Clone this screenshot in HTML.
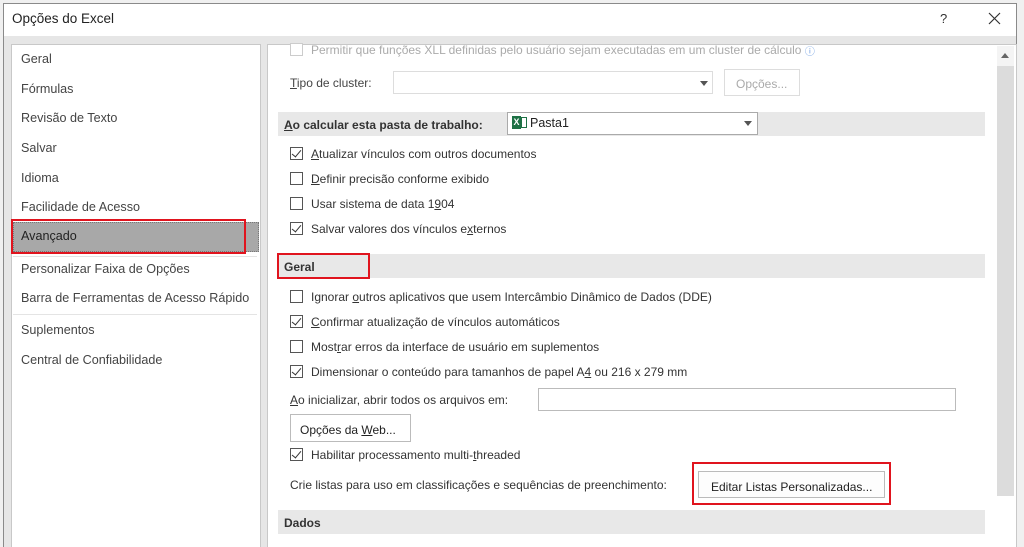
<!DOCTYPE html>
<html><head><meta charset="utf-8"><style>
*{box-sizing:border-box;margin:0;padding:0}
html,body{width:1024px;height:547px;overflow:hidden}
body{background:#f0f0f0;font-family:"Liberation Sans",sans-serif;font-size:12px;color:#333;position:relative}
.a{position:absolute;white-space:nowrap}
.dlg{left:3px;top:3px;width:1014px;height:544px;background:#e6e6e6;border:1px solid #8a8a8a;border-bottom:none}
.title{left:4px;top:4px;width:1012px;height:32px;background:#fff}
.left{left:11px;top:44px;width:250px;height:503px;background:#fff;border:1px solid #c8c8c8;border-bottom:none}
.right{left:267px;top:44px;width:750px;height:503px;background:#fff;border:1px solid #c8c8c8;border-bottom:none}
.li{left:21px;font-size:12.6px;color:#444}
.cb{width:13px;height:13px;border:1px solid #555;background:#fff;left:290px}
.cb.c::after{content:"";position:absolute;left:3px;top:0px;width:4px;height:8px;border:solid #333;border-width:0 1.3px 1.3px 0;transform:rotate(40deg)}
.t{left:311px}
.band{left:278px;width:707px;height:24px;background:#e8e8e8;font-weight:bold;padding:6px 6px}
.box{border:1px solid #bbb;background:#fff}
.red{border:2px solid #e0141e}
.arr{width:0;height:0;border-left:4px solid transparent;border-right:4px solid transparent;border-top:5px solid #555}
u{text-decoration:underline}
</style></head><body>
<div class="a dlg"></div>
<div class="a title"></div>
<div class="a" style="left:12px;top:11px;font-size:13.5px;color:#222">Opções do Excel</div>
<div class="a" style="left:940px;top:11px;font-size:13px;color:#333">?</div>
<svg class="a" style="left:988px;top:12px" width="13" height="13"><path d="M1 1L12 12M12 1L1 12" stroke="#333" stroke-width="1.2"/></svg>
<div class="a left"></div>
<div class="a right"></div>
<div class="a li" style="top:52px">Geral</div>
<div class="a li" style="top:82px">Fórmulas</div>
<div class="a li" style="top:111px">Revisão de Texto</div>
<div class="a li" style="top:141px">Salvar</div>
<div class="a li" style="top:171px">Idioma</div>
<div class="a li" style="top:200px">Facilidade de Acesso</div>
<div class="a" style="left:13px;top:222px;width:246px;height:30px;background:#a8a8a8;border:1px dotted #777"></div>
<div class="a red" style="left:11px;top:219px;width:235px;height:35px"></div>
<div class="a li" style="top:229px;color:#222">Avançado</div>
<div class="a" style="left:13px;top:256px;width:244px;height:1px;background:#e4e4e4"></div>
<div class="a li" style="top:262px">Personalizar Faixa de Opções</div>
<div class="a li" style="top:291px">Barra de Ferramentas de Acesso Rápido</div>
<div class="a" style="left:13px;top:314px;width:244px;height:1px;background:#e4e4e4"></div>
<div class="a li" style="top:323px">Suplementos</div>
<div class="a li" style="top:353px">Central de Confiabilidade</div>

<div class="a" style="left:997px;top:46px;width:17px;height:450px;background:#dcdcdc"></div>
<div class="a" style="left:997px;top:46px;width:17px;height:20px;background:#f4f4f4"></div>
<div class="a" style="left:1001px;top:53px;border-left:4px solid transparent;border-right:4px solid transparent;border-bottom:5px solid #666"></div>

<div class="a cb" style="top:43px;border-color:#ccc"></div>
<div class="a t" style="top:43px;color:#aaa">Permitir que funções XLL definidas pelo usuário sejam executadas em um cluster de cálculo <span style="color:#6a9be0;font-size:10px;vertical-align:top">ⓘ</span></div>
<div class="a" style="left:290px;top:76px;color:#444"><u>T</u>ipo de cluster:</div>
<div class="a box" style="left:393px;top:71px;width:320px;height:23px;border-color:#ddd"></div>
<div class="a arr" style="left:700px;top:81px"></div>
<div class="a box" style="left:724px;top:69px;width:76px;height:27px;border-color:#ddd;color:#aaa;padding:7px 11px">Opções...</div>

<div class="a band" style="top:112px"><u>A</u>o calcular esta pasta de trabalho:</div>
<div class="a box" style="left:507px;top:112px;width:251px;height:23px;border-color:#aaa"></div>
<div class="a" style="left:512px;top:116px;width:9px;height:13px;background:#1e7145;color:#fff;font-size:9px;font-weight:bold;text-align:center;line-height:13px">X</div>
<div class="a" style="left:521px;top:117px;width:6px;height:11px;border:1px solid #1e7145"></div>
<div class="a" style="left:530px;top:116px;color:#222;font-size:12.5px">Pasta1</div>
<div class="a arr" style="left:744px;top:121px"></div>

<div class="a cb c" style="top:147px"></div><div class="a t" style="top:147px"><u>A</u>tualizar vínculos com outros documentos</div>
<div class="a cb" style="top:172px"></div><div class="a t" style="top:172px"><u>D</u>efinir precisão conforme exibido</div>
<div class="a cb" style="top:197px"></div><div class="a t" style="top:197px">Usar sistema de data 1<u>9</u>04</div>
<div class="a cb c" style="top:222px"></div><div class="a t" style="top:222px">Salvar valores dos vínculos e<u>x</u>ternos</div>

<div class="a band" style="top:254px">Geral</div>
<div class="a red" style="left:277px;top:253px;width:93px;height:26px"></div>

<div class="a cb" style="top:290px"></div><div class="a t" style="top:290px">Ignorar <u>o</u>utros aplicativos que usem Intercâmbio Dinâmico de Dados (DDE)</div>
<div class="a cb c" style="top:315px"></div><div class="a t" style="top:315px"><u>C</u>onfirmar atualização de vínculos automáticos</div>
<div class="a cb" style="top:340px"></div><div class="a t" style="top:340px">Most<u>r</u>ar erros da interface de usuário em suplementos</div>
<div class="a cb c" style="top:365px"></div><div class="a t" style="top:365px">Dimensionar o conteúdo para tamanhos de papel A<u>4</u> ou 216 x 279 mm</div>
<div class="a" style="left:290px;top:393px"><u>A</u>o inicializar, abrir todos os arquivos em:</div>
<div class="a box" style="left:538px;top:388px;width:418px;height:23px"></div>
<div class="a box" style="left:290px;top:414px;width:121px;height:28px;padding:8px 9px;color:#222">Opções da <u>W</u>eb...</div>
<div class="a cb c" style="top:448px"></div><div class="a t" style="top:448px">Habilitar processamento multi-<u>t</u>hreaded</div>
<div class="a" style="left:290px;top:478px">Crie listas para uso em classificações e sequências de preenchimento:</div>
<div class="a box" style="left:698px;top:471px;width:187px;height:27px;padding:8px 12px;color:#222;background:#fdfdfd">Editar Listas Personalizadas...</div>
<div class="a red" style="left:692px;top:462px;width:199px;height:43px"></div>

<div class="a band" style="top:510px">Dados</div>
</body></html>
